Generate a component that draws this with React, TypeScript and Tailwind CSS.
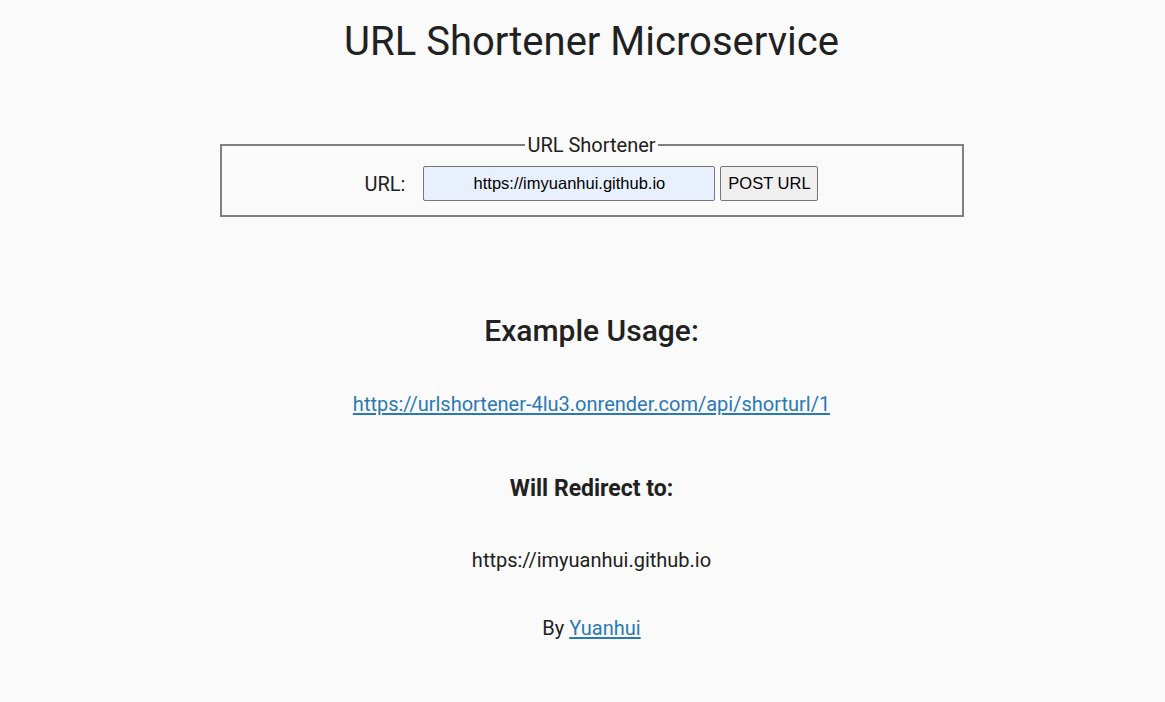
import { useState } from "react";

const App = () => {
  const [url, setUrl] = useState("https://imyuanhui.github.io");

  const handleSubmit = (e: React.FormEvent) => {
    e.preventDefault();
  };

  return (
    <div className="min-h-[702px] w-full bg-[#fafafa] pl-[18px] text-[#212121] font-['Roboto','Liberation_Sans',sans-serif]">
      <div className="flex flex-col items-center text-center">
        <h1 className="mt-[18px] text-[40px] leading-[48px] font-normal">URL Shortener Microservice</h1>

        <form onSubmit={handleSubmit} className="mt-[67px]">
          <fieldset className="w-[744px] border-2 border-[#808080] pt-[9px] pb-[14px]">
            <legend className="mx-auto px-[2px] text-[20px] leading-[24px]">URL Shortener</legend>
            <div className="flex items-center justify-center">
              <label htmlFor="url" className="text-[20px] leading-[24px]">URL:</label>
              <input
                id="url"
                type="text"
                value={url}
                onChange={(e) => setUrl(e.target.value)}
                className="ml-[18px] h-[35px] w-[292px] rounded-[2px] border border-[#767676] bg-[#e8f0fe] px-2 text-center text-[16.5px] text-black font-['Liberation_Sans',Arial,sans-serif] focus:outline-none"
              />
              <button
                type="submit"
                className="ml-[5px] h-[35px] w-[98px] rounded-[2px] border border-[#767676] bg-[#efefef] text-[16.5px] text-black font-['Liberation_Sans',Arial,sans-serif]"
              >
                POST URL
              </button>
            </div>
          </fieldset>
        </form>

        <h2 className="mt-[96px] text-[30px] leading-[36px] font-medium">Example Usage:</h2>
        <a
          href="#"
          className="mt-[43px] text-[20px] leading-[24px] text-[#2a79b5] underline underline-offset-2"
        >
          https://urlshortener-4lu3.onrender.com/api/shorturl/1
        </a>

        <h3 className="mt-[59px] text-[23px] leading-[28px] font-bold">Will Redirect to:</h3>
        <p className="mt-[45px] text-[20px] leading-[24px]">https://imyuanhui.github.io</p>

        <p className="mt-[44px] text-[20px] leading-[24px]">
          By{" "}
          <a href="#" className="text-[#2a79b5] underline underline-offset-2">
            Yuanhui
          </a>
        </p>
      </div>
    </div>
  );
};

export default App;
